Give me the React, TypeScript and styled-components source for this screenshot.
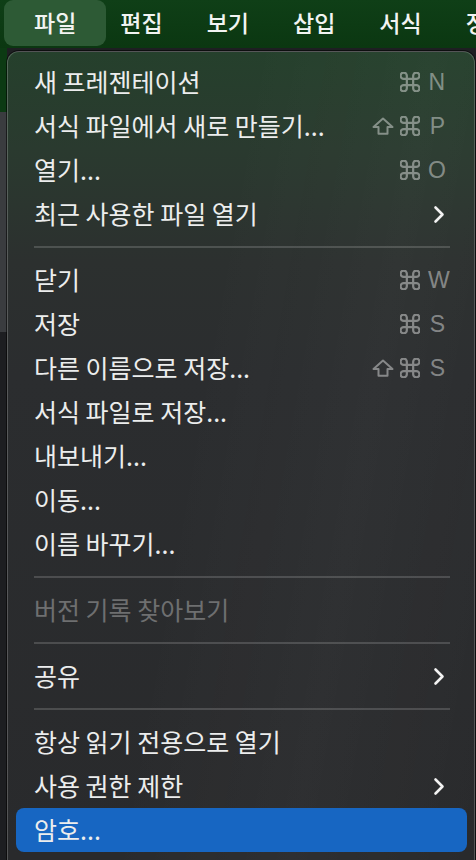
import React from 'react';
import styled, { createGlobalStyle } from 'styled-components';

const GlobalStyle = createGlobalStyle`
    *, *::before, *::after {
        box-sizing: border-box;
    }
    html, body {
        margin: 0;
        padding: 0;
        background: #1e1f22;
    }
    body {
        font-family: "Noto Sans CJK KR", "Noto Sans", sans-serif;
        -webkit-font-smoothing: antialiased;
    }
`;

const Page = styled.div`
    width: 476px;
    height: 860px;
    overflow: hidden;
    display: flex;
    flex-direction: column;
    background: #1e1f22;
`;

const MenuBar = styled.div`
    height: 48px;
    flex: none;
    display: flex;
    align-items: flex-start;
    padding-left: 12px;
    background: linear-gradient(#0f3f17, #0b3711);
    white-space: nowrap;
    overflow: hidden;
`;

const MenuTitle = styled.div<{ $active?: boolean }>`
    flex: none;
    height: 46px;
    line-height: 44px;
    padding: 0 ${p => (p.$active ? 29.7 : 22)}px;
    margin: 0 ${p => (p.$active ? -7.7 : 0)}px;
    border-radius: 9px;
    font-size: 23px;
    font-weight: 500;
    color: #f2f4f2;
    background: ${p => (p.$active ? '#2d5a35' : 'transparent')};
`;

const Workspace = styled.div`
    flex: 1;
    display: flex;
    min-height: 0;
`;

const Backdrop = styled.div`
    width: 7px;
    flex: none;
    display: flex;
    flex-direction: column;
`;

const BackdropBlock = styled.div<{ $h?: number; $color: string }>`
    height: ${p => (p.$h ? `${p.$h}px` : 'auto')};
    flex: ${p => (p.$h ? 'none' : '1')};
    background: ${p => p.$color};
`;

const Panel = styled.div`
    width: 468px;
    flex: none;
    margin-top: 3px;
    padding: 8px 7px 0 8px;
    border: 1px solid rgba(255, 255, 255, 0.2);
    border-bottom: none;
    border-radius: 12px 12px 0 0;
    box-shadow: 0 0 0 1px rgba(0, 0, 0, 0.55);
    background:
        linear-gradient(100deg, rgba(255, 255, 255, 0) 40%, rgba(255, 255, 255, 0.025) 70%, rgba(255, 255, 255, 0) 100%),
        linear-gradient(180deg, #25402c 0%, #2a3a2f 12%, #2c302f 26%, #2b2d2f 40%, #292a2c 100%);
`;

const Row = styled.div<{ $selected?: boolean; $disabled?: boolean }>`
    height: 44px;
    display: flex;
    align-items: center;
    padding: 0 22px 0 18px;
    border-radius: 8px;
    font-size: 25px;
    color: ${p => (p.$disabled ? '#6e6f70' : '#eceded')};
    background: ${p => (p.$selected ? '#1766c2' : 'transparent')};
`;

const Label = styled.span`
    flex: 1;
    white-space: nowrap;
    line-height: 1;
    position: relative;
    top: -1px;
`;

const Shortcut = styled.span`
    display: flex;
    align-items: center;
    color: rgba(255, 255, 255, 0.42);
    font-family: "Liberation Sans", Arial, sans-serif;
    font-size: 23px;
    line-height: 1;
`;

const Key = styled.span`
    width: 17px;
    margin-left: 8px;
    text-align: right;
`;

const Separator = styled.div`
    height: 22px;
    display: flex;
    align-items: center;
    padding: 0 17px 0 18px;

    &::after {
        content: '';
        flex: 1;
        height: 2px;
        background: rgba(255, 255, 255, 0.16);
    }
`;

const CommandIcon = () => (
    <svg width="20" height="20" viewBox="2.5 2.5 19 19" fill="none" stroke="currentColor" strokeWidth="2.1" strokeLinecap="round" strokeLinejoin="round">
        <path d="M15 6v12a3 3 0 1 0 3-3H6a3 3 0 1 0 3 3V6a3 3 0 1 0-3 3h12a3 3 0 1 0-3-3" />
    </svg>
);

const ShiftIcon = () => (
    <svg width="22" height="18" viewBox="0 0 22 18" fill="none" stroke="currentColor" strokeWidth="2" strokeLinejoin="round" style={{ marginRight: 6 }}>
        <path d="M11 1.5 L20.5 10 H15.5 V16.8 H6.5 V10 H1.5 Z" />
    </svg>
);

const Chevron = () => (
    <svg width="12" height="19" viewBox="0 0 12 19" fill="none" stroke="#f2f2f2" strokeWidth="2.6" strokeLinecap="round" strokeLinejoin="round">
        <path d="M2.5 2.5 L9.5 9.5 L2.5 16.5" />
    </svg>
);

type Item =
    | { kind: 'sep' }
    | { kind: 'item'; label: string; shift?: boolean; key?: string; submenu?: boolean; disabled?: boolean; selected?: boolean };

const items: Item[] = [
    { kind: 'item', label: '새 프레젠테이션', key: 'N' },
    { kind: 'item', label: '서식 파일에서 새로 만들기...', shift: true, key: 'P' },
    { kind: 'item', label: '열기...', key: 'O' },
    { kind: 'item', label: '최근 사용한 파일 열기', submenu: true },
    { kind: 'sep' },
    { kind: 'item', label: '닫기', key: 'W' },
    { kind: 'item', label: '저장', key: 'S' },
    { kind: 'item', label: '다른 이름으로 저장...', shift: true, key: 'S' },
    { kind: 'item', label: '서식 파일로 저장...' },
    { kind: 'item', label: '내보내기...' },
    { kind: 'item', label: '이동...' },
    { kind: 'item', label: '이름 바꾸기...' },
    { kind: 'sep' },
    { kind: 'item', label: '버전 기록 찾아보기', disabled: true },
    { kind: 'sep' },
    { kind: 'item', label: '공유', submenu: true },
    { kind: 'sep' },
    { kind: 'item', label: '항상 읽기 전용으로 열기' },
    { kind: 'item', label: '사용 권한 제한', submenu: true },
    { kind: 'item', label: '암호...', selected: true },
];

const titles = ['파일', '편집', '보기', '삽입', '서식', '정렬'];

export default function App() {
    return (
        <Page>
            <GlobalStyle />
            <MenuBar>
                {titles.map((t, i) => (
                    <MenuTitle key={t} $active={i === 0}>{t}</MenuTitle>
                ))}
            </MenuBar>
            <Workspace>
                <Backdrop>
                    <BackdropBlock $h={64} $color="#0c3a13" />
                    <BackdropBlock $h={220} $color="#3a3c3f" />
                    <BackdropBlock $color="#1d1e21" />
                </Backdrop>
                <Panel>
                    {items.map((it, i) => {
                        if (it.kind === 'sep') return <Separator key={i} />;
                        return (
                            <Row key={i} $selected={it.selected} $disabled={it.disabled}>
                                <Label>{it.label}</Label>
                                {it.key && (
                                    <Shortcut>
                                        {it.shift && <ShiftIcon />}
                                        <CommandIcon />
                                        <Key>{it.key}</Key>
                                    </Shortcut>
                                )}
                                {it.submenu && <Chevron />}
                            </Row>
                        );
                    })}
                </Panel>
            </Workspace>
        </Page>
    );
}
